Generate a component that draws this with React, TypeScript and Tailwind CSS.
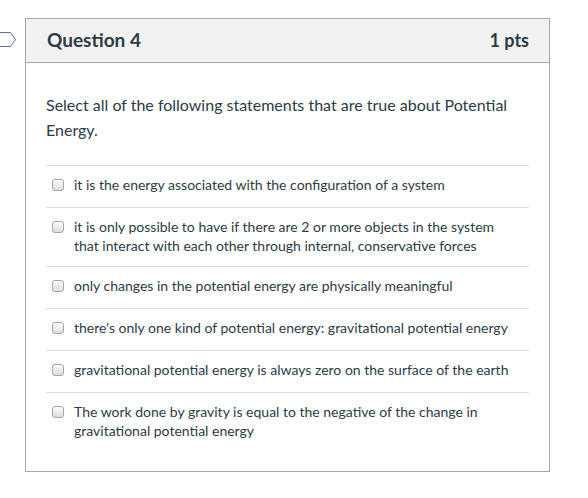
import React from "react";

const answers = [
  "it is the energy associated with the configuration of a system",
  "it is only possible to have if there are 2 or more objects in the system that interact with each other through internal, conservative forces",
  "only changes in the potential energy are physically meaningful",
  "there's only one kind of potential energy: gravitational potential energy",
  "gravitational potential energy is always zero on the surface of the earth",
  "The work done by gravity is equal to the negative of the change in gravitational potential energy",
];

function Box() {
  return (
    <span className="mt-[3px] block h-[12px] w-[12px] shrink-0 rounded-[3px] border border-[#a6a6a6] bg-gradient-to-b from-[#fbfbfb] to-[#dedede]" />
  );
}

export default function App() {
  return (
    <div
      className="relative h-[498px] w-[588px] bg-white text-[#2d3b45]"
      style={{ fontFamily: "Lato, 'Open Sans', sans-serif" }}
    >
      <svg className="absolute left-0 top-[32px]" width="18" height="16" viewBox="0 0 18 16">
        <path d="M-2 0.5 H10.5 L15.5 7.5 L10.5 14.5 H-2" fill="none" stroke="#5a7896" strokeWidth="1" />
      </svg>
      <div className="absolute left-[25px] top-[18px] w-[525px] border border-[#a8a8a8]">
        <div className="flex h-[44px] items-center justify-between border-b border-[#a8a8a8] bg-[#f2f2f2] pl-[21px] pr-[20px]">
          <span className="text-[19px] font-bold">Question 4</span>
          <span className="text-[18px] font-bold">1 pts</span>
        </div>
        <div className="px-[20px] pb-[20px] pt-[29px]">
          <p className="mb-[23px] text-[16px] leading-[25px]">
            Select all of the following statements that are true about Potential Energy.
          </p>
          <div>
            {answers.map((a, i) => (
              <div key={i} className="flex min-h-[42px] gap-[10px] border-t border-[#dcdcdc] pb-[11px] pl-[6px] pr-[10px] pt-[10px]">
                <Box />
                <span className="text-[14px] leading-[18.5px]">{a}</span>
              </div>
            ))}
          </div>
        </div>
      </div>
    </div>
  );
}
